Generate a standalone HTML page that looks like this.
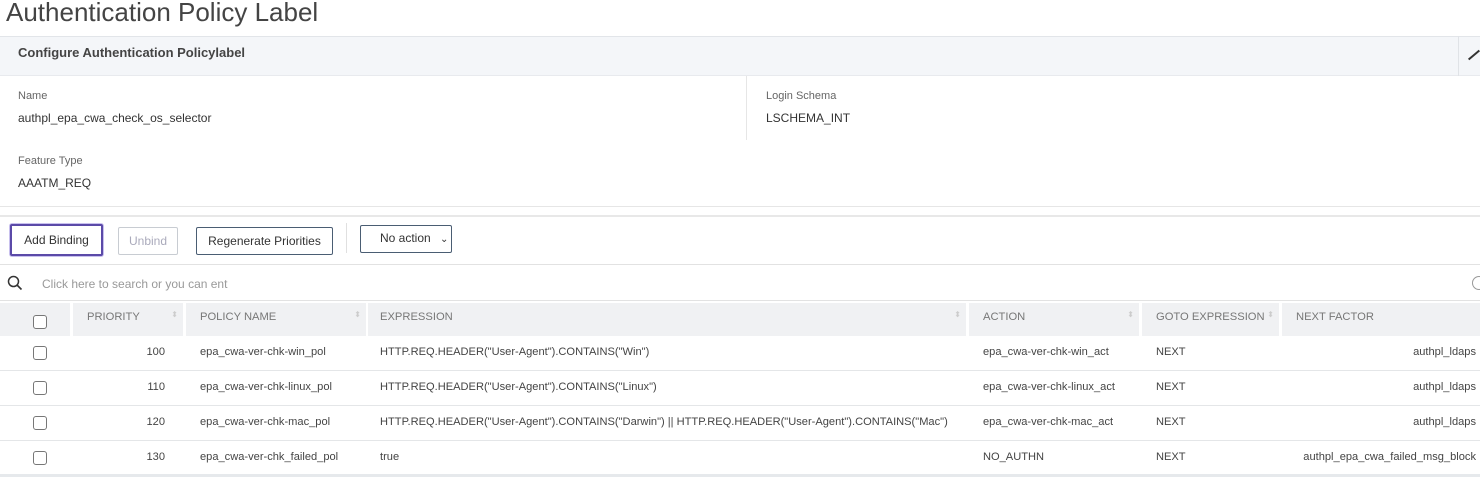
<!DOCTYPE html>
<html><head><meta charset="utf-8"><style>
*{margin:0;padding:0;box-sizing:border-box}
body{width:1480px;height:478px;overflow:hidden;background:#fff;font-family:"Liberation Sans",sans-serif;color:#333;position:relative}
.a{position:absolute;white-space:nowrap}
.lbl{font-size:11px;color:#666}
.val{font-size:12px;color:#333}
.btn{position:absolute;border:1px solid #4a5d73;border-radius:2px;font-size:12px;color:#333;text-align:center;line-height:26px;height:28px;background:#fff}
.hd{position:absolute;top:303px;height:33px;background:#f0f1f3;font-size:11.2px;color:#777;line-height:28px;padding-left:14px}
.sort{position:absolute;right:5px;top:9px;font-size:8px;color:#ccc;line-height:5px}
.row{position:absolute;left:0;width:1480px;height:35px;border-bottom:1px solid #e4e6e8;font-size:11.1px;color:#444}
.row span{position:absolute;top:10px;white-space:nowrap}
.cb{position:absolute;left:33px;width:14px;height:14px;border:1.5px solid #777;border-radius:3px;background:#fff}
</style></head><body>
<div class="a" style="left:6px;top:-3px;font-size:26px;color:#444">Authentication Policy Label</div>
<div class="a" style="left:0;top:36px;width:1480px;height:40px;background:#f4f6f9;border-top:1px solid #e2e5e9;border-bottom:1px solid #e8eaee"></div>
<div class="a" style="left:18px;top:45px;font-size:13px;font-weight:bold;color:#444;line-height:16px">Configure Authentication Policylabel</div>
<div class="a" style="left:1458px;top:36px;width:1px;height:40px;background:#e0e3e7"></div>
<div class="a" style="left:1467px;top:54px;width:14px;height:2px;background:#333;transform:rotate(-40deg)"></div>
<div class="a lbl" style="left:18px;top:90px">Name</div>
<div class="a val" style="left:18px;top:111px">authpl_epa_cwa_check_os_selector</div>
<div class="a" style="left:746px;top:76px;width:1px;height:64px;background:#e6e6e6"></div>
<div class="a lbl" style="left:766px;top:90px">Login Schema</div>
<div class="a val" style="left:766px;top:111px">LSCHEMA_INT</div>
<div class="a lbl" style="left:18px;top:155px">Feature Type</div>
<div class="a val" style="left:18px;top:176px">AAATM_REQ</div>
<div class="a" style="left:0;top:206px;width:1480px;height:1px;background:#e6e6e6"></div>
<div class="a" style="left:0;top:215px;width:1480px;height:2px;background:#e8e8e8"></div>
<div class="btn" style="left:10px;top:224px;width:93px;height:32px;border:2px solid #5b4aa8;line-height:28px;box-shadow:0 0 0 1px #c8c0ee">Add Binding</div>
<div class="btn" style="left:118px;top:227px;width:60px;border-color:#c8ccd2;color:#aab">Unbind</div>
<div class="btn" style="left:196px;top:227px;width:137px">Regenerate Priorities</div>
<div class="a" style="left:346px;top:223px;width:1px;height:30px;background:#e0e0e0"></div>
<div class="btn" style="left:360px;top:225px;width:92px;text-align:left;padding-left:19px;line-height:25px">No action <span style="font-size:10px;margin-left:6px">&#8964;</span></div>
<div class="a" style="left:0;top:264px;width:1480px;height:1px;background:#e2e2e2"></div>
<svg class="a" style="left:7px;top:275px" width="16" height="16" viewBox="0 0 16 16"><circle cx="6.5" cy="6.5" r="5" fill="none" stroke="#333" stroke-width="1.5"/><line x1="10" y1="10" x2="14.5" y2="14.5" stroke="#333" stroke-width="1.6"/></svg>
<div class="a" style="left:42px;top:277px;font-size:12px;color:#999">Click here to search or you can ent</div>
<div class="a" style="left:1472px;top:276px;width:14px;height:14px;border:1.5px solid #999;border-radius:50%"></div>
<div class="a" style="left:0;top:300px;width:1480px;height:1px;background:#e2e2e2"></div>
<div class="hd" style="left:0;width:70px"></div>
<div class="cb" style="top:315px"></div>
<div class="hd" style="left:73px;width:110px">PRIORITY<span class="sort">⬍</span></div>
<div class="hd" style="left:186px;width:180px">POLICY NAME<span class="sort">⬍</span></div>
<div class="hd" style="left:368px;width:598px;padding-left:12px">EXPRESSION<span class="sort">⬍</span></div>
<div class="hd" style="left:969px;width:170px">ACTION<span class="sort">⬍</span></div>
<div class="hd" style="left:1142px;width:137px">GOTO EXPRESSION<span class="sort">⬍</span></div>
<div class="hd" style="left:1282px;width:198px">NEXT FACTOR</div>

<div class="row" style="top:336px"><div class="cb" style="top:10px"></div><span style="right:1315px">100</span><span style="left:200px">epa_cwa-ver-chk-win_pol</span><span style="left:380px">HTTP.REQ.HEADER("User-Agent").CONTAINS("Win")</span><span style="left:983px">epa_cwa-ver-chk-win_act</span><span style="left:1156px">NEXT</span><span style="right:4px">authpl_ldaps</span></div>
<div class="row" style="top:371px"><div class="cb" style="top:10px"></div><span style="right:1315px">110</span><span style="left:200px">epa_cwa-ver-chk-linux_pol</span><span style="left:380px">HTTP.REQ.HEADER("User-Agent").CONTAINS("Linux")</span><span style="left:983px">epa_cwa-ver-chk-linux_act</span><span style="left:1156px">NEXT</span><span style="right:4px">authpl_ldaps</span></div>
<div class="row" style="top:406px"><div class="cb" style="top:10px"></div><span style="right:1315px">120</span><span style="left:200px">epa_cwa-ver-chk-mac_pol</span><span style="left:380px">HTTP.REQ.HEADER("User-Agent").CONTAINS("Darwin") || HTTP.REQ.HEADER("User-Agent").CONTAINS("Mac")</span><span style="left:983px">epa_cwa-ver-chk-mac_act</span><span style="left:1156px">NEXT</span><span style="right:4px">authpl_ldaps</span></div>
<div class="row" style="top:441px;border-bottom:3px solid #e6e9ec;height:36px"><div class="cb" style="top:10px"></div><span style="right:1315px">130</span><span style="left:200px">epa_cwa-ver-chk_failed_pol</span><span style="left:380px">true</span><span style="left:983px">NO_AUTHN</span><span style="left:1156px">NEXT</span><span style="right:4px">authpl_epa_cwa_failed_msg_block</span></div>
</body></html>
